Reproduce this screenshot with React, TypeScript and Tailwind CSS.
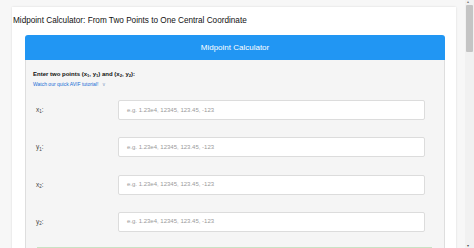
import React from "react";

const rows = [
  { v: "x", s: "1" },
  { v: "y", s: "1" },
  { v: "x", s: "2" },
  { v: "y", s: "2" },
];

export default function App() {
  return (
    <div
      className="w-[474px] h-[248px] overflow-hidden flex bg-[#f7f7f7] text-[#222]"
      style={{ fontFamily: '"Liberation Sans", Arial, sans-serif' }}
    >
      <div className="w-[465px] pl-[12px] pr-[9px] pt-[7px]">
        <div className="bg-white h-[260px] shadow-[0_0_2px_rgba(0,0,0,0.12)] pt-[9px]">
          <h1 className="ml-[1px] text-[8.2px] leading-[10px] font-normal text-[#111]">
            Midpoint Calculator: From Two Points to One Central Coordinate
          </h1>
          <div className="ml-[13px] mr-[11px] mt-[9px]">
            <div className="h-[25px] bg-[#2196f3] rounded-t-[3px] flex items-center justify-center text-white text-[8px]">
              Midpoint Calculator
            </div>
            <div className="bg-[#f5f5f5] border-x border-[#dedede] pt-[10px] pb-[4px]">
              <div className="pl-[7px] text-[6px] leading-[8px] font-bold text-[#111]">
                Enter two points (x<sub className="text-[4.2px]">1</sub>, y<sub className="text-[4.2px]">1</sub>) and (x<sub className="text-[4.2px]">2</sub>, y<sub className="text-[4.2px]">2</sub>):
              </div>
              <div className="pl-[7px] mt-[3px] text-[5px] leading-[6px] text-[#1a6fd6] flex items-center gap-[4px]">
                <span>Watch our quick AVIF tutorial!</span>
                <span className="text-[#8aa3c8] text-[5px]">&#8744;</span>
              </div>
              <div className="mt-[13px] flex flex-col gap-[17.3px] pl-[10px] pr-[19px]">
                {rows.map((r, i) => (
                  <div key={i} className="flex items-center h-[20px]">
                    <div className="w-[82px] text-[6.5px] text-[#444]">
                      {r.v}
                      <sub className="text-[4.5px]">{r.s}</sub>:
                    </div>
                    <div className="flex-1 h-[20px] bg-white border border-[#dcdcdc] rounded-[2px] flex items-center pl-[8px] text-[6px] text-[#9a9a9a]">
                      e.g. 1.23e4, 12345, 123.45, -123
                    </div>
                  </div>
                ))}
              </div>
              <div className="mt-[15px] ml-[11px] mr-[12px] h-[10px] bg-[#e3f1e0] border-t border-[#c9e2c4]" />
            </div>
          </div>
        </div>
      </div>
      <div className="w-[9px] h-[248px] bg-[#f1f1f1] relative">
        <div className="absolute left-[2px] top-[0px] text-[4px] leading-[4px] text-[#777]">▴</div>
        <div className="absolute left-[1px] right-[1px] top-[5px] h-[47px] bg-[#c4c4c4] rounded-[1px]" />
        <div className="absolute left-[2px] bottom-[0px] text-[4px] leading-[4px] text-[#555]">▾</div>
      </div>
    </div>
  );
}
